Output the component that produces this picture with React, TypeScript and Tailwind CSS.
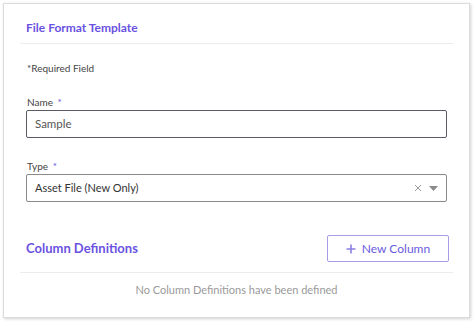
import React from "react";

export default function App() {
  return (
    <div className="w-[474px] h-[323px] bg-white p-[3px] pr-[4px] pb-[5px]" style={{ fontFamily: "Lato, 'Liberation Sans', sans-serif" }}>
      <div className="h-[315px] border border-[#dcdcdc] shadow-[1px_1px_3px_rgba(0,0,0,0.18)] bg-white px-[16px] flex flex-col">
        <div className="h-[40px] border-b border-[#ececec] flex items-end pb-[9px] pl-[6px]">
          <span className="text-[12px] font-bold text-[#6a52df] leading-none">File Format Template</span>
        </div>
        <div className="pl-[7px] pt-[19px] text-[10px] text-[#444] leading-none">*Required Field</div>
        <div className="px-[6px] pt-[24px]">
          <div className="text-[10px] text-[#444] leading-none pl-[1px]">Name <span className="ml-[2px] text-[#6a52df]">*</span></div>
          <div className="mt-[3px] h-[28px] border border-[#5a5a66] rounded-[2px] flex items-center px-[8px] text-[11.5px] text-[#555]">Sample</div>
        </div>
        <div className="px-[6px] pt-[23px]">
          <div className="text-[10px] text-[#444] leading-none pl-[1px]">Type <span className="ml-[2px] text-[#6a52df]">*</span></div>
          <div className="mt-[3px] h-[28px] border border-[#8a8a8a] rounded-[2px] flex items-center pl-[8px] pr-[8px] text-[11px] text-[#333]">
            <span className="flex-1">Asset File (New Only)</span>
            <svg width="8" height="8" viewBox="0 0 8 8" className="mr-[7px]">
              <path d="M1 1 L7 7 M7 1 L1 7" stroke="#9a9a9a" strokeWidth="1" />
            </svg>
            <svg width="9" height="5" viewBox="0 0 9 5">
              <path d="M0 0 L9 0 L4.5 5 Z" fill="#8a8a8a" />
            </svg>
          </div>
        </div>
        <div className="flex items-center justify-between pl-[6px] pr-[4px] mt-[33px] pb-[10px] border-b border-[#ececec]">
          <span className="text-[13px] font-bold text-[#6a52df]">Column Definitions</span>
          <button className="w-[122px] h-[27px] border border-[#a89be9] rounded-[2px] flex items-center justify-center gap-[6px] text-[12px] text-[#6a5ce0]">
            <svg width="10" height="10" viewBox="0 0 10 10">
              <path d="M5 0.5 V9.5 M0.5 5 H9.5" stroke="#8c80e6" strokeWidth="1.6" />
            </svg>
            <span>New Column</span>
          </button>
        </div>
        <div className="text-center text-[11px] text-[#9a9a9a] pt-[9px]">No Column Definitions have been defined</div>
      </div>
    </div>
  );
}
